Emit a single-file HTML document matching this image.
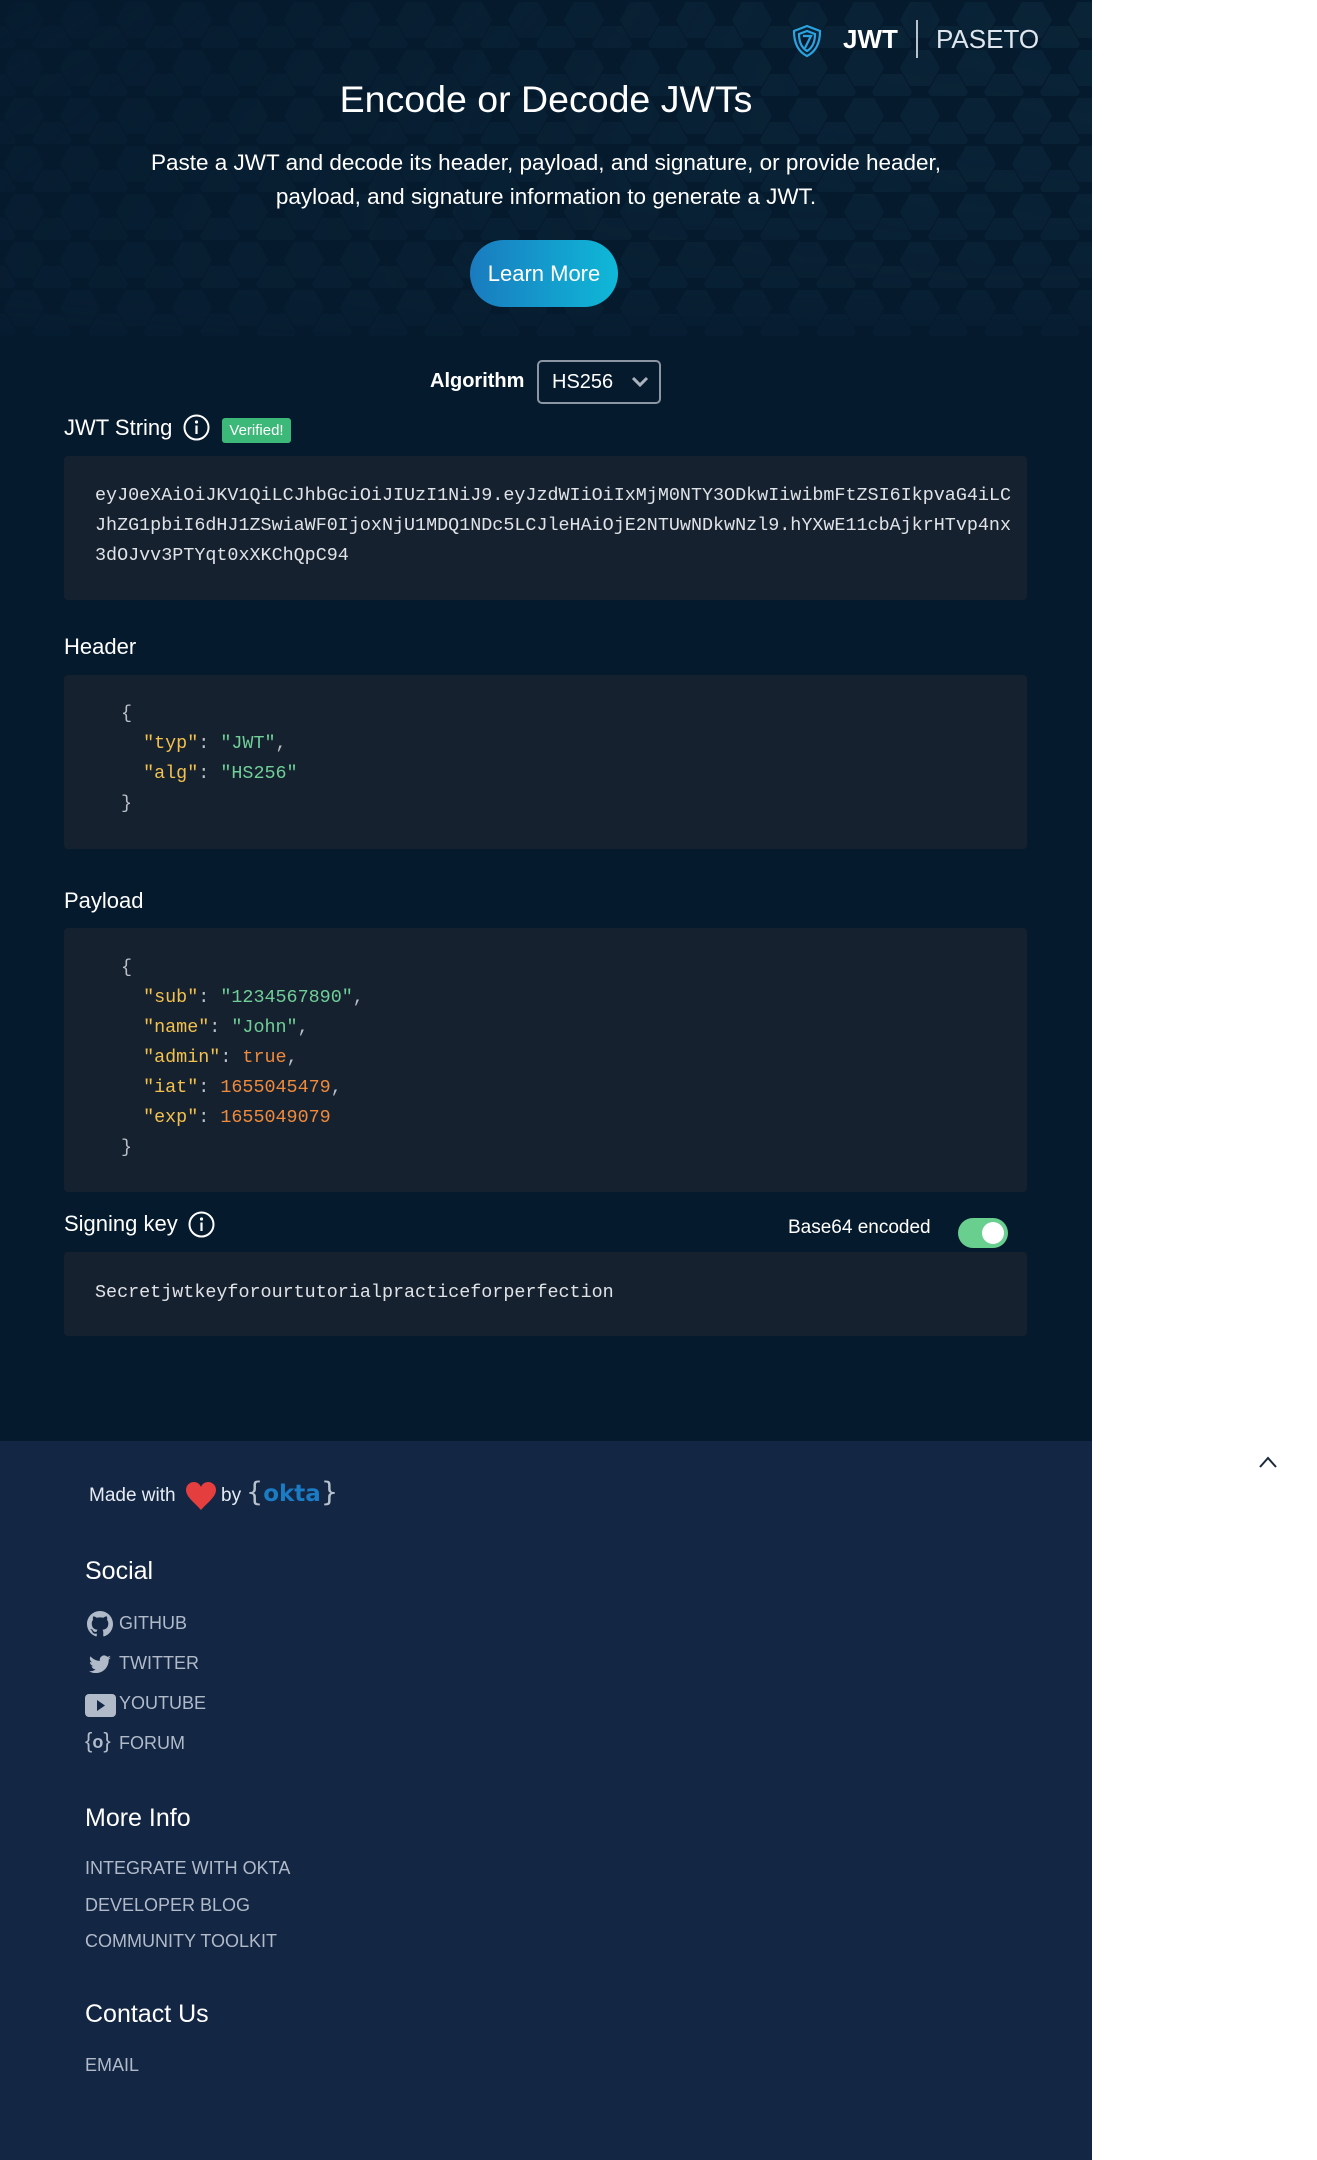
<!DOCTYPE html>
<html><head><meta charset="utf-8"><style>
*{margin:0;padding:0;box-sizing:border-box}
body{width:1317px;height:2160px;background:#fff;font-family:"Liberation Sans",sans-serif;position:relative;overflow:hidden}
.main{position:absolute;left:0;top:0;width:1092px;height:1441px;background:#061a2e}
.foot{position:absolute;left:0;top:1441px;width:1092px;height:719px;background:#132644}
.a{position:absolute;white-space:nowrap}
.box{position:absolute;left:64px;width:963px;background:#16212f;border-radius:4px}
.mono{font-family:"Liberation Mono",monospace;font-size:18.4px;color:#dfe3e8;line-height:30px}
.k{color:#f2c14e}.s{color:#6fcf97}.n{color:#ef8a3c}.p{color:#b9c0c8}
.lbl{color:#fff;font-size:22px}
.fl{color:#b0bac8;font-size:18px;left:85px}
.fh{color:#fff;font-size:25px;left:85px}
</style></head><body>
<div class="main">
<svg width="1092" height="338" style="position:absolute;left:0;top:0">
<defs>
<pattern id="hx" width="56" height="48" patternUnits="userSpaceOnUse">
<polygon points="14,2 34,2 44,20 34,38 14,38 4,20" fill="#0b2538"/>
<polygon points="42,26 62,26 72,44 62,62 42,62 32,44" fill="#0b2538"/>
<polygon points="-14,26 6,26 16,44 6,62 -14,62 -24,44" fill="#0b2538"/>
</pattern>
<linearGradient id="g" x1="0" y1="0" x2="1" y2="0.6"><stop offset="0" stop-color="#fff" stop-opacity="0.15"/><stop offset="0.7" stop-color="#fff" stop-opacity="0.9"/><stop offset="1" stop-color="#fff" stop-opacity="1"/></linearGradient>
<linearGradient id="g2" x1="0" y1="0" x2="0" y2="1"><stop offset="0" stop-color="#fff"/><stop offset="0.85" stop-color="#fff" stop-opacity="0.6"/><stop offset="1" stop-color="#fff" stop-opacity="0.3"/></linearGradient>
<mask id="m2"><rect width="1092" height="338" fill="url(#g2)"/></mask>
<mask id="m"><rect width="1092" height="338" fill="url(#g)" mask="url(#m2)"/></mask>
</defs>
<rect width="1092" height="338" fill="url(#hx)" mask="url(#m)"/>
</svg>
<svg class="a" style="left:792px;top:24px" width="30" height="34" viewBox="0 0 30 34" fill="none" stroke="#2aa3e0" stroke-width="2.2"><path d="M15 2 L28 7 C28 20 23 28 15 32 C7 28 2 20 2 7 Z"/><path d="M15 7 L23 10 C23 19 20 24 15 27 C10 24 7 19 7 10 Z"/><path d="M11 12 L19 12 L13 24"/></svg>
<div class="a" style="left:843px;top:24px;font-size:26px;font-weight:bold;color:#fff">JWT</div>
<div class="a" style="left:916px;top:20px;width:2px;height:38px;background:#b8c2cc"></div>
<div class="a" style="left:936px;top:24px;font-size:26px;color:#dfe6ee">PASETO</div>
<div class="a" style="left:0;width:1092px;text-align:center;top:78px;font-size:37.5px;color:#fff">Encode or Decode JWTs</div>
<div class="a" style="left:0;width:1092px;text-align:center;top:146px;font-size:22.5px;line-height:34px;color:#fff">Paste a JWT and decode its header, payload, and signature, or provide header,<br>payload, and signature information to generate a JWT.</div>
<div class="a" style="left:470px;top:240px;width:148px;height:67px;border-radius:34px;background:linear-gradient(90deg,#1a7bbf,#0fb8d8);color:#fff;font-size:22px;text-align:center;line-height:67px">Learn More</div>
<div class="a" style="left:430px;top:370px;font-size:20px;font-weight:bold;color:#fff">Algorithm</div>
<div class="a" style="left:537px;top:360px;width:124px;height:44px;border:2px solid #8c96a2;border-radius:5px;color:#fff;font-size:20px;padding:9px 0 0 13px">HS256<svg style="position:absolute;left:92px;top:14px" width="18" height="12" viewBox="0 0 18 12"><path d="M2 2 L9 9 L16 2" stroke="#aab3bd" stroke-width="3" fill="none"/></svg></div>
<div class="a lbl" style="left:64px;top:415px">JWT String</div>
<svg class="a" style="left:183px;top:414px" width="27" height="27" viewBox="0 0 27 27"><circle cx="13.5" cy="13.5" r="12" stroke="#fff" stroke-width="2" fill="none"/><circle cx="13.5" cy="8" r="1.6" fill="#fff"/><path d="M13.5 11.5 V20" stroke="#fff" stroke-width="2.2"/></svg>
<div class="a" style="left:222px;top:418px;width:69px;height:25px;background:#3cb878;border-radius:3px;color:#fff;font-size:15px;text-align:center;line-height:25px">Verified!</div>
<div class="box mono" style="top:456px;height:144px;padding:25px 0 0 31px">eyJ0eXAiOiJKV1QiLCJhbGciOiJIUzI1NiJ9.eyJzdWIiOiIxMjM0NTY3ODkwIiwibmFtZSI6IkpvaG4iLC<br>JhZG1pbiI6dHJ1ZSwiaWF0IjoxNjU1MDQ1NDc5LCJleHAiOjE2NTUwNDkwNzl9.hYXwE11cbAjkrHTvp4nx<br>3dOJvv3PTYqt0xXKChQpC94</div>
<div class="a lbl" style="left:64px;top:634px">Header</div>
<div class="box mono" style="top:675px;height:174px;padding:24px 0 0 57px;white-space:pre"><span class="p">{</span>
  <span class="k">"typ"</span><span class="p">: </span><span class="s">"JWT"</span><span class="p">,</span>
  <span class="k">"alg"</span><span class="p">: </span><span class="s">"HS256"</span>
<span class="p">}</span></div>
<div class="a lbl" style="left:64px;top:888px">Payload</div>
<div class="box mono" style="top:928px;height:264px;padding:25px 0 0 57px;white-space:pre"><span class="p">{</span>
  <span class="k">"sub"</span><span class="p">: </span><span class="s">"1234567890"</span><span class="p">,</span>
  <span class="k">"name"</span><span class="p">: </span><span class="s">"John"</span><span class="p">,</span>
  <span class="k">"admin"</span><span class="p">: </span><span class="n">true</span><span class="p">,</span>
  <span class="k">"iat"</span><span class="p">: </span><span class="n">1655045479</span><span class="p">,</span>
  <span class="k">"exp"</span><span class="p">: </span><span class="n">1655049079</span>
<span class="p">}</span></div>
<div class="a lbl" style="left:64px;top:1211px">Signing key</div>
<svg class="a" style="left:188px;top:1211px" width="27" height="27" viewBox="0 0 27 27"><circle cx="13.5" cy="13.5" r="12" stroke="#fff" stroke-width="2" fill="none"/><circle cx="13.5" cy="8" r="1.6" fill="#fff"/><path d="M13.5 11.5 V20" stroke="#fff" stroke-width="2.2"/></svg>
<div class="a" style="left:788px;top:1217px;font-size:19px;color:#fff">Base64 encoded</div>
<div class="a" style="left:958px;top:1218px;width:50px;height:30px;border-radius:15px;background:#68cf8e"><div style="position:absolute;left:24px;top:4px;width:22px;height:22px;border-radius:50%;background:#fff"></div></div>
<div class="box mono" style="top:1252px;height:84px;padding:26px 0 0 31px">Secretjwtkeyforourtutorialpracticeforperfection</div>
</div>
<svg class="a" style="left:1258px;top:1455px" width="20" height="14" viewBox="0 0 20 14"><path d="M2 12 L10 3 L18 12" stroke="#1a2a3a" stroke-width="2" fill="none"/></svg>
<div class="foot">
<div class="a" style="left:89px;top:44px;font-size:19px;color:#e6ebf2">Made with</div>
<svg class="a" style="left:185px;top:40px" width="32" height="30" viewBox="0 0 32 30"><path d="M16 29 C10 22 1 16 1 9 C1 4 5 1 9 1 C12 1 15 3 16 6 C17 3 20 1 23 1 C27 1 31 4 31 9 C31 16 22 22 16 29Z" fill="#e53e3e"/></svg>
<div class="a" style="left:221px;top:44px;font-size:19px;color:#e6ebf2">by</div>
<div class="a" style="left:246px;top:36px;font-size:27px;color:#b8c2cc;font-family:'DejaVu Sans',sans-serif">{<span style="color:#1b7bc4;font-size:23px;font-weight:bold">okta</span>}</div>
<div class="a fh" style="top:116px">Social</div>
<svg class="a" style="left:87px;top:170px" width="26" height="26" viewBox="0 0 16 16"><path fill="#b0bac8" d="M8 0C3.58 0 0 3.58 0 8c0 3.54 2.29 6.53 5.47 7.59.4.07.55-.17.55-.38v-1.33c-2.23.48-2.7-1.07-2.7-1.07-.36-.92-.89-1.17-.89-1.17-.73-.5.06-.49.06-.49.8.06 1.23.83 1.23.83.71 1.22 1.87.87 2.33.66.07-.52.28-.87.51-1.07-1.78-.2-3.64-.89-3.64-3.95 0-.87.31-1.59.82-2.15-.08-.2-.36-1.02.08-2.12 0 0 .67-.21 2.2.82a7.6 7.6 0 014 0c1.53-1.04 2.2-.82 2.2-.82.44 1.1.16 1.92.08 2.12.51.56.82 1.27.82 2.15 0 3.07-1.87 3.75-3.65 3.95.29.25.54.73.54 1.48v2.2c0 .21.15.46.55.38A8 8 0 0016 8c0-4.42-3.58-8-8-8z"/></svg>
<div class="a fl" style="top:172px;left:119px">GITHUB</div>
<svg class="a" style="left:87px;top:212px" width="26" height="24" viewBox="0 0 24 24"><path fill="#b0bac8" d="M23 4.6c-.8.4-1.7.6-2.6.7.9-.6 1.6-1.4 2-2.5-.9.5-1.9.9-2.9 1.1a4.5 4.5 0 00-7.7 4.1C8 7.8 4.7 6 2.5 3.3a4.5 4.5 0 001.4 6c-.7 0-1.4-.2-2-.6 0 2.2 1.6 4 3.6 4.4-.7.2-1.4.2-2 .1.6 1.8 2.2 3.1 4.2 3.1A9 9 0 011 18.2 12.8 12.8 0 007.9 20c8.3 0 12.8-6.9 12.8-12.8v-.6c.9-.6 1.7-1.4 2.3-2z"/></svg>
<div class="a fl" style="top:212px;left:119px">TWITTER</div>
<svg class="a" style="left:85px;top:253px" width="31" height="23" viewBox="0 0 31 23"><rect width="31" height="23" rx="4" fill="#b0bac8"/><path d="M12 6 L20 11.5 L12 17Z" fill="#132644"/></svg>
<div class="a fl" style="top:252px;left:119px">YOUTUBE</div>
<div class="a" style="left:85px;top:287px;font-size:22px;color:#b0bac8">{<span style="font-weight:bold;font-size:18px">o</span>}</div>
<div class="a fl" style="top:292px;left:119px">FORUM</div>
<div class="a fh" style="top:363px">More Info</div>
<div class="a fl" style="top:417px">INTEGRATE WITH OKTA</div>
<div class="a fl" style="top:454px">DEVELOPER BLOG</div>
<div class="a fl" style="top:490px">COMMUNITY TOOLKIT</div>
<div class="a fh" style="top:559px">Contact Us</div>
<div class="a fl" style="top:614px">EMAIL</div>
</div>
</body></html>
